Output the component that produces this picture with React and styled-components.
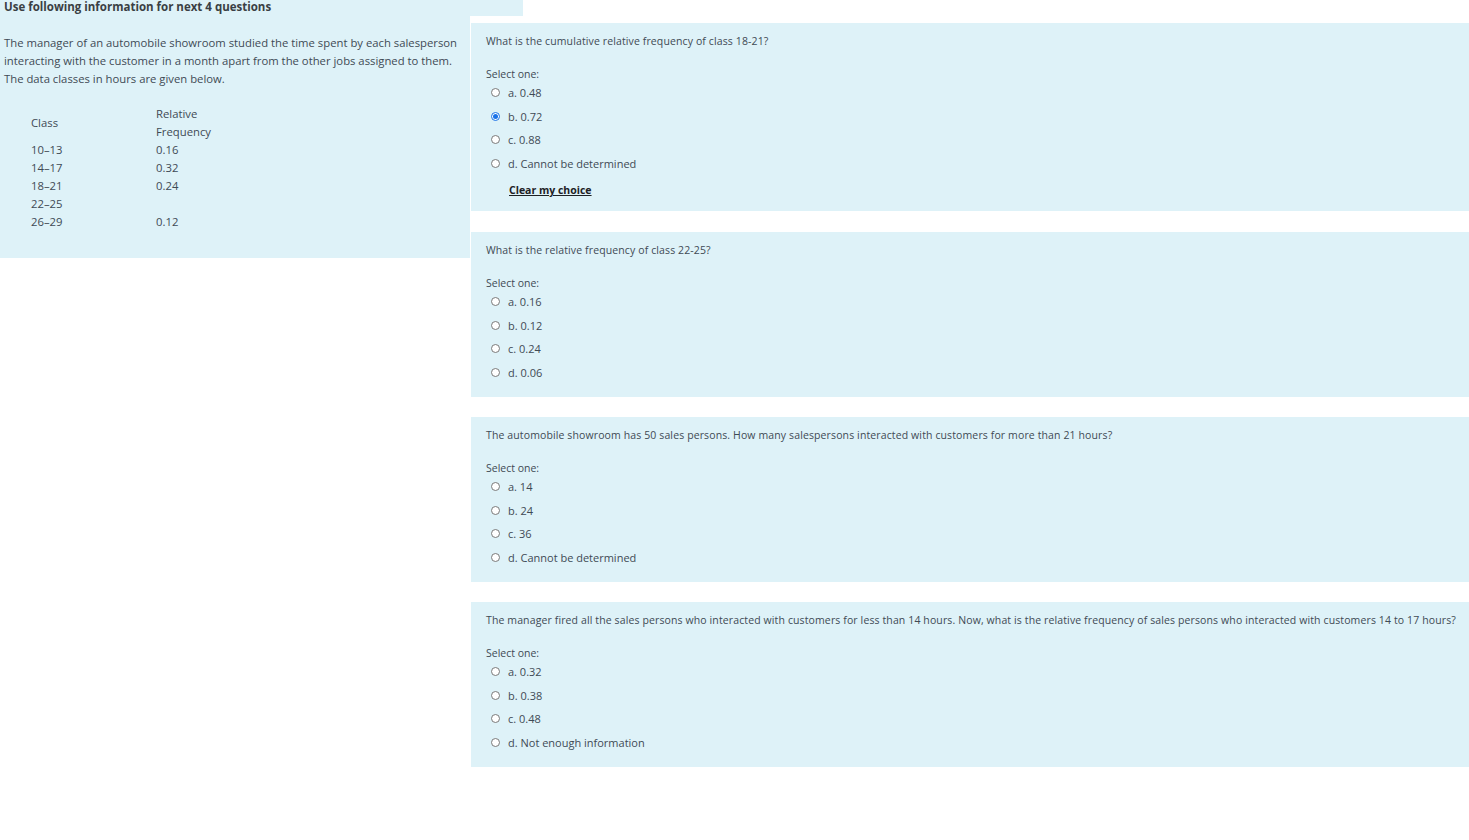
import styled, { createGlobalStyle } from "styled-components";

const GlobalStyle = createGlobalStyle`
   body {
      margin: 0;
      background: #ffffff;
      font-family: "Open Sans", "Noto Sans", sans-serif;
      color: #3f4a55;
   }
`;

const Page = styled.div`
   width: 1469px;
   height: 840px;
   display: flex;
   flex-direction: column;
`;

const Header = styled.div`
   width: 519px;
   height: 16px;
   padding-left: 4px;
   background: #def2f8;
   font-size: 11.5px;
   font-weight: 700;
   color: #3a3f44;
   line-height: 14px;
`;

const Body = styled.div`
   display: flex;
   align-items: flex-start;
   gap: 1px;
`;

const InfoPanel = styled.div`
   flex-shrink: 0;
   width: 470px;
   height: 242px;
   padding: 18px 0 0 4px;
   box-sizing: border-box;
   background: #def2f8;
   font-size: 11.3px;
   line-height: 18px;
`;

const Paragraph = styled.p`
   margin: 0 0 17px;
`;

const Table = styled.div`
   display: grid;
   grid-template-columns: 125px 100px;
   padding-left: 27px;
`;

const HeadCell = styled.div`
   display: flex;
   flex-direction: column;
   justify-content: center;
   height: 36px;
`;

const Cell = styled.div`
   height: 18px;
`;

const Questions = styled.div`
   flex: 1;
   min-width: 0;
   display: flex;
   flex-direction: column;
   gap: 20px;
   padding-top: 7px;
`;

const Card = styled.div`
   height: ${(p) => p.$height}px;
   margin-bottom: ${(p) => p.$extra || 0}px;
   box-sizing: border-box;
   padding: 10px 15px 0;
   background: #def2f8;
`;

const QuestionText = styled.div`
   font-size: 10.5px;
   line-height: 16px;
   letter-spacing: 0.12px;
   white-space: nowrap;
   margin-bottom: 17px;
`;

const Prompt = styled.div`
   font-size: 10.5px;
   line-height: 16px;
   margin-bottom: -1px;
`;

const Option = styled.label`
   display: flex;
   align-items: center;
   height: 23.6px;
   padding-left: 5px;
   font-size: 11px;
`;

const Radio = styled.span`
   width: 9px;
   height: 9px;
   box-sizing: border-box;
   border-radius: 50%;
   border: 1px solid ${(p) => (p.$checked ? "#1a73e8" : "#7a7a7a")};
   background: #fff;
   margin-right: 8px;
   display: flex;
   align-items: center;
   justify-content: center;

   &::after {
      content: "";
      width: 5px;
      height: 5px;
      border-radius: 50%;
      background: ${(p) => (p.$checked ? "#1a73e8" : "transparent")};
   }
`;

const ClearLink = styled.a`
   display: inline-block;
   margin: 8px 0 0 23px;
   font-size: 10.5px;
   font-weight: 700;
   color: #1d2125;
   text-decoration: underline;
`;

const rows = [
   ["10–13", "0.16"],
   ["14–17", "0.32"],
   ["18–21", "0.24"],
   ["22–25", ""],
   ["26–29", "0.12"],
];

const questions = [
   {
      text: "What is the cumulative relative frequency of class 18-21?",
      options: ["a. 0.48", "b. 0.72", "c. 0.88", "d. Cannot be determined"],
      checked: 1,
      clear: true,
      height: 188,
      extra: 1,
   },
   {
      text: "What is the relative frequency of class 22-25?",
      options: ["a. 0.16", "b. 0.12", "c. 0.24", "d. 0.06"],
      height: 165,
   },
   {
      text: "The automobile showroom has 50 sales persons.  How many salespersons interacted with customers for more than 21 hours?",
      options: ["a. 14", "b. 24", "c. 36", "d. Cannot be determined"],
      height: 165,
   },
   {
      text: "The manager fired all the sales persons who interacted with customers for less than 14 hours.  Now, what is the relative frequency of sales persons who interacted with customers 14 to 17 hours?",
      options: ["a. 0.32", "b. 0.38", "c. 0.48", "d. Not enough information"],
      height: 165,
   },
];

const App = () => {
   return (
      <Page>
         <GlobalStyle />
         <Header>Use following information for next 4 questions</Header>
         <Body>
            <InfoPanel>
               <Paragraph>
                  The manager of an automobile showroom studied the time spent by each salesperson
                  <br />
                  interacting with the customer in a month apart from the other jobs assigned to them.
                  <br />
                  The data classes in hours are given below.
               </Paragraph>
               <Table>
                  <HeadCell>Class</HeadCell>
                  <HeadCell>
                     <span>Relative</span>
                     <span>Frequency</span>
                  </HeadCell>
                  {rows.map(([c, f]) => [
                     <Cell key={c}>{c}</Cell>,
                     <Cell key={c + "f"}>{f}</Cell>,
                  ])}
               </Table>
            </InfoPanel>
            <Questions>
               {questions.map((q, i) => (
                  <Card key={i} $height={q.height} $extra={q.extra}>
                     <QuestionText>{q.text}</QuestionText>
                     <Prompt>Select one:</Prompt>
                     {q.options.map((o, j) => (
                        <Option key={o}>
                           <Radio $checked={q.checked === j} />
                           {o}
                        </Option>
                     ))}
                     {q.clear && <ClearLink href="#">Clear my choice</ClearLink>}
                  </Card>
               ))}
            </Questions>
         </Body>
      </Page>
   );
};

export default App;
